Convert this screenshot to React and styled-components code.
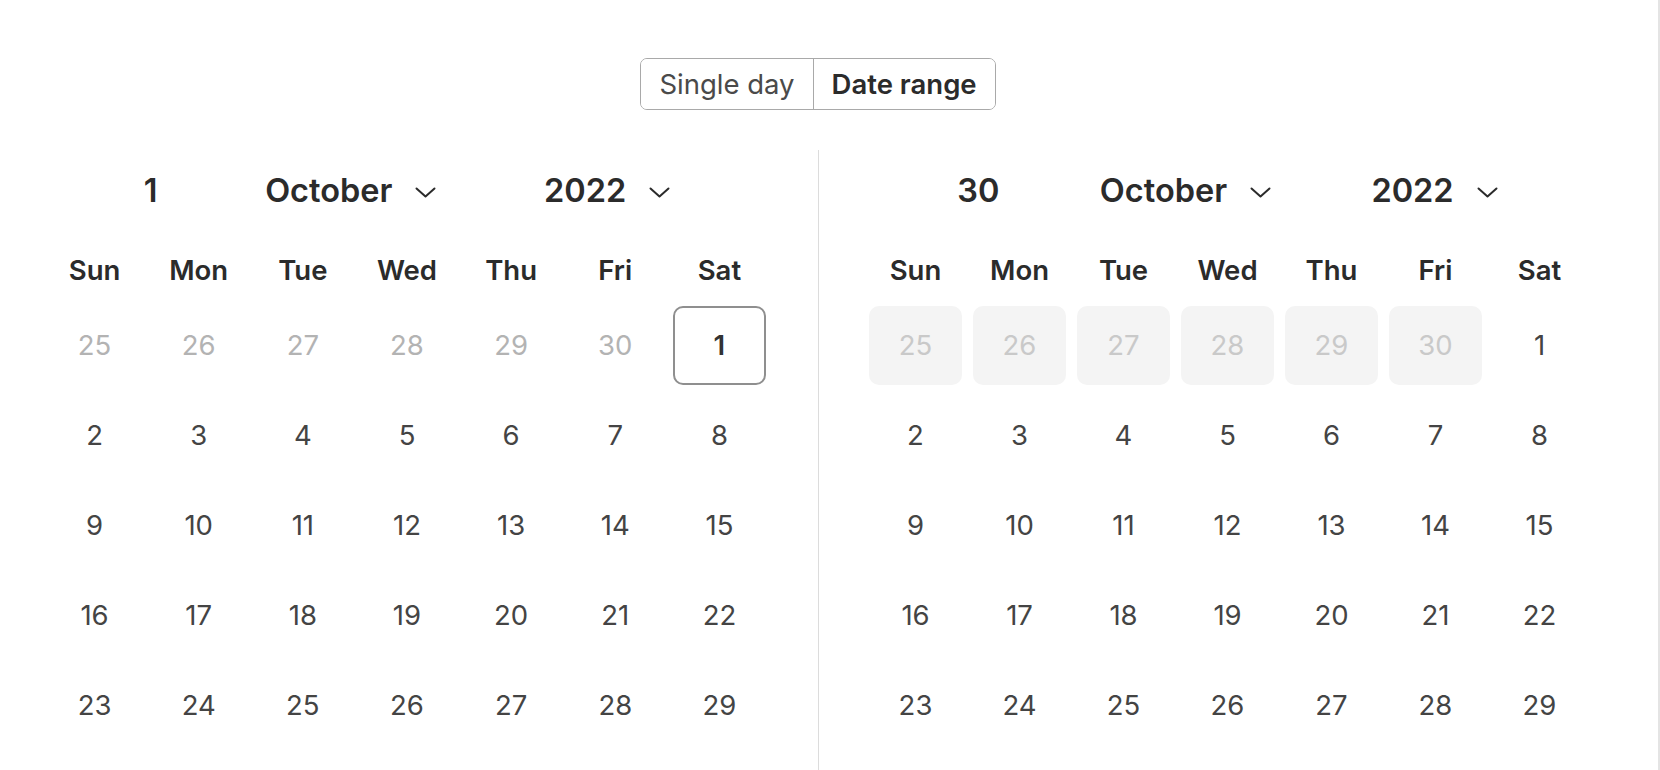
import React from "react";
import styled, { createGlobalStyle } from "styled-components";

const GlobalStyle = createGlobalStyle`
  html, body {
    margin: 0;
    padding: 0;
    overflow: hidden;
    background: #ffffff;
  }
  body {
    font-family: Inter, "Noto Sans", "Liberation Sans", sans-serif;
    -webkit-font-smoothing: antialiased;
  }
  * { box-sizing: border-box; }
`;

const Page = styled.div`
  width: 100vw;
  height: 100vh;
  border-right: 2px solid #e4e4e4;
  overflow: hidden;
`;

const Content = styled.div`
  width: 1636px;
  padding-top: 58px;
  display: flex;
  flex-direction: column;
  align-items: center;
`;

const Toggle = styled.div`
  display: flex;
  border: 1.5px solid #a9a9a9;
  border-radius: 7px;
  overflow: hidden;
`;

const ToggleButton = styled.button`
  height: 50px;
  padding: 0 18px;
  margin: 0;
  border: none;
  border-left: ${(p) => (p.$first ? "none" : "1.5px solid #a9a9a9")};
  background: #ffffff;
  font-family: inherit;
  font-size: 27.5px;
  line-height: 50px;
  font-weight: ${(p) => (p.$active ? 600 : 400)};
  color: ${(p) => (p.$active ? "#2b2b2b" : "#4a4a4a")};
  cursor: pointer;
`;

const Panels = styled.div`
  width: 100%;
  margin-top: 40px;
  display: grid;
  grid-template-columns: 1fr 1fr;
`;

const Panel = styled.section`
  padding: ${(p) => (p.$divider ? "19px 38px 0 38px" : "19px 40px 0 36px")};
  border-left: ${(p) => (p.$divider ? "1.5px solid #dcdcdc" : "none")};
  height: 640px;
`;

const Header = styled.div`
  display: flex;
  justify-content: space-evenly;
  align-items: center;
  height: 44px;
`;

const HeadText = styled.span`
  font-size: 32.5px;
  line-height: 44px;
  font-weight: 600;
  color: #2b2b2b;
`;

const Select = styled.div`
  display: flex;
  align-items: center;
  gap: 23px;
  cursor: pointer;
`;

const Chevron = styled.svg`
  width: 21px;
  height: 11px;
  margin-top: 3px;
  flex: none;
`;

const Weekdays = styled.div`
  margin: 39px 12px 0 12px;
  display: grid;
  grid-template-columns: repeat(7, 1fr);
  column-gap: 11px;
`;

const Weekday = styled.div`
  text-align: center;
  font-size: 27.5px;
  line-height: 36px;
  font-weight: 600;
  color: #2b2b2b;
`;

const Days = styled.div`
  margin: 18px 12px 0 12px;
  display: grid;
  grid-template-columns: repeat(7, 1fr);
  grid-auto-rows: 79px;
  gap: 11px;
`;

const dayColors = {
  normal: "#444444",
  muted: "#b3b3b3",
  disabled: "#c9c9c9",
  selected: "#333333",
};

const Day = styled.div`
  display: flex;
  align-items: center;
  justify-content: center;
  border-radius: 10px;
  font-size: 27.5px;
  line-height: 1;
  font-weight: ${(p) => (p.$variant === "selected" ? 600 : 400)};
  color: ${(p) => dayColors[p.$variant]};
  background: ${(p) => (p.$variant === "disabled" ? "#f4f4f4" : "transparent")};
  border: ${(p) =>
    p.$variant === "selected" ? "2px solid #8f8f8f" : "2px solid transparent"};
  cursor: ${(p) => (p.$variant === "disabled" ? "default" : "pointer")};
`;

const WEEKDAYS = ["Sun", "Mon", "Tue", "Wed", "Thu", "Fri", "Sat"];

function buildDays() {
  const cells = [];
  for (let d = 25; d <= 30; d++) cells.push({ n: d, month: "prev" });
  for (let d = 1; d <= 29; d++) cells.push({ n: d, month: "cur" });
  return cells;
}

const ChevronIcon = () => (
  <Chevron viewBox="0 0 21 11" fill="none">
    <path
      d="M1.5 1.5 L10.5 9.5 L19.5 1.5"
      stroke="#2b2b2b"
      strokeWidth="2"
      strokeLinecap="round"
      strokeLinejoin="round"
    />
  </Chevron>
);

function Calendar({ day, selected, disableBefore, divider }) {
  const cells = buildDays();
  return (
    <Panel $divider={divider}>
      <Header>
        <HeadText>{day}</HeadText>
        <Select>
          <HeadText>October</HeadText>
          <ChevronIcon />
        </Select>
        <Select>
          <HeadText>2022</HeadText>
          <ChevronIcon />
        </Select>
      </Header>
      <Weekdays>
        {WEEKDAYS.map((w) => (
          <Weekday key={w}>{w}</Weekday>
        ))}
      </Weekdays>
      <Days>
        {cells.map((c, i) => {
          let variant = "normal";
          if (c.month !== "cur") variant = disableBefore ? "disabled" : "muted";
          else if (c.n === selected) variant = "selected";
          return (
            <Day key={i} $variant={variant}>
              {c.n}
            </Day>
          );
        })}
      </Days>
    </Panel>
  );
}

export default function App() {
  return (
    <>
      <GlobalStyle />
      <Page>
        <Content>
          <Toggle>
            <ToggleButton $first>Single day</ToggleButton>
            <ToggleButton $active>Date range</ToggleButton>
          </Toggle>
          <Panels>
            <Calendar day="1" selected={1} />
            <Calendar day="30" selected={30} disableBefore divider />
          </Panels>
        </Content>
      </Page>
    </>
  );
}
